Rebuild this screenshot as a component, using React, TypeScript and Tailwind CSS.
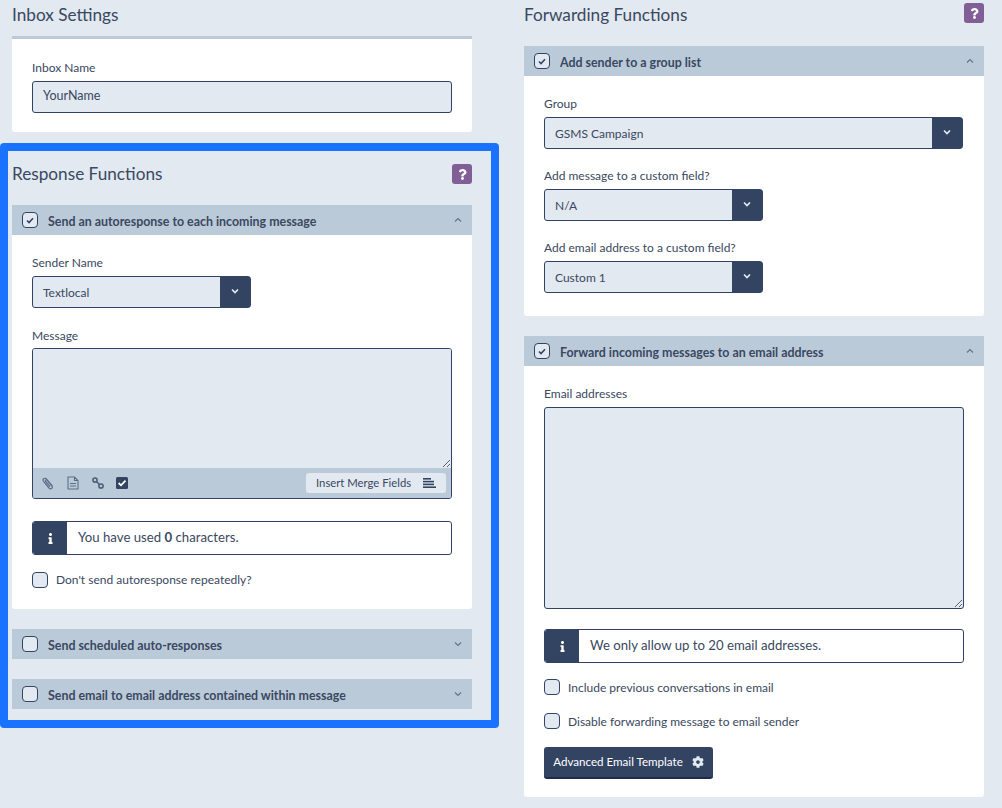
import React from "react";
import { FaInfo, FaCog, FaQuestion } from "react-icons/fa";

function Help() {
  return (
    <div className="w-5 h-5 rounded-[3px] bg-[#825e96] flex items-center justify-center text-white">
      <FaQuestion className="w-[9px] h-[11px]" />
    </div>
  );
}

function Chevron({ up, bold }: { up?: boolean; bold?: boolean }) {
  return (
    <svg width="8" height="6" viewBox="0 0 8 6" fill="none" stroke="currentColor" strokeWidth={bold ? 1.7 : 1.1}>
      <path d={up ? "M1 4.5 L4 1.5 L7 4.5" : "M1 1.5 L4 4.5 L7 1.5"} />
    </svg>
  );
}

function Box({ checked }: { checked?: boolean }) {
  return (
    <span className="w-4 h-4 shrink-0 rounded-[4px] border border-[#334463] bg-[#e2e9f0] flex items-center justify-center">
      {checked && (
        <svg width="8" height="7" viewBox="0 0 8 7" fill="none" stroke="#334463" strokeWidth="1.6">
          <path d="M1 3.5 L3 5.5 L7 1.2" />
        </svg>
      )}
    </span>
  );
}

function Header({ title, open, checked }: { title: string; open?: boolean; checked?: boolean }) {
  return (
    <div className="h-[30px] bg-[#bacad9] flex items-center px-[10px]">
      <Box checked={checked} />
      <span className="ml-[10px] flex-1 pt-[4px] text-[12.4px] font-bold text-[#3a4860]">{title}</span>
      <span className="text-[#5f738c] flex">
        <Chevron up={open} />
      </span>
    </div>
  );
}

function Select({ value, wide }: { value: string; wide?: boolean }) {
  return (
    <div className={`h-8 flex rounded-[3px] border border-[#334463] bg-[#e2e9f0] ${wide ? "w-[419px]" : "w-[219px]"}`}>
      <div className="flex-1 pl-[10px] text-[12px] leading-[32px] text-[#3a4860]">{value}</div>
      <div className="w-[30px] bg-[#334463] flex items-center justify-center text-[#e2e9f0]">
        <span className="flex -mt-[3px]">
          <Chevron bold />
        </span>
      </div>
    </div>
  );
}

function Label({ children }: { children: React.ReactNode }) {
  return <div className="text-[12px] leading-[16px] mb-[5px] text-[#3a4860]">{children}</div>;
}

function Info({ children }: { children: React.ReactNode }) {
  return (
    <div className="h-[34px] flex rounded-[3px] border border-[#334463] bg-white overflow-hidden">
      <div className="w-[34px] bg-[#334463] flex items-center justify-center text-white">
        <FaInfo className="w-[5px] h-[11px]" />
      </div>
      <div className="pl-[11px] text-[13.2px] leading-[30px] text-[#3a4860]">{children}</div>
    </div>
  );
}

function Check({ label, low }: { label: string; low?: boolean }) {
  return (
    <div className="flex items-center gap-2 h-4">
      <Box />
      <span className={`text-[12px] text-[#3a4860] ${low ? "pt-[2px]" : ""}`}>{label}</span>
    </div>
  );
}

function Toolbar() {
  return (
    <div className="h-[30px] bg-[#bacad9] flex items-center pl-[9px] pr-[5px] text-[#5c6f89]">
      <svg width="12" height="13" viewBox="0 0 12 13" fill="none" stroke="currentColor" strokeWidth="1.2">
        <path d="M10.5 9.2 L4.6 2.2 C3.7 1.1 2.4 1 1.6 1.7 C0.8 2.4 0.8 3.7 1.7 4.7 L7 11 C7.8 11.9 9 12.1 9.8 11.4 C10.6 10.7 10.4 9.6 9.7 8.8 L5 3.2 C4.6 2.8 4 2.7 3.6 3.1 C3.2 3.4 3.3 4 3.7 4.5 L8 9.6" />
      </svg>
      <svg className="ml-[13px]" width="12" height="14" viewBox="0 0 12 14" fill="none" stroke="currentColor" strokeWidth="1.1">
        <path d="M1 1 H7.5 L11 4.5 V13 H1 Z M7.5 1 V4.5 H11 M3 7.5 H9 M3 10 H9" />
      </svg>
      <svg className="ml-[13px]" width="12" height="12" viewBox="0 0 12 12" fill="none" stroke="#475a76" strokeWidth="1.5">
        <circle cx="3" cy="3" r="2.1" />
        <circle cx="9" cy="9" r="2.1" />
        <path d="M4.5 4.5 L7.5 7.5" />
      </svg>
      <svg className="ml-[12px]" width="12" height="12" viewBox="0 0 12 12">
        <rect width="12" height="12" rx="1.5" fill="#334463" />
        <path d="M2.6 6 L5 8.3 L9.5 3.6" fill="none" stroke="#ffffff" strokeWidth="1.8" />
      </svg>
      <div className="ml-auto h-5 w-[140px] rounded-[3px] bg-[#e2e9f0] flex items-center justify-between px-[10px] text-[11.3px] text-[#3a4860]">
        <span>Insert Merge Fields</span>
        <svg width="13" height="10" viewBox="0 0 13 10" fill="#334463">
          <rect y="0" width="8" height="1.6" />
          <rect y="2.8" width="11" height="1.6" />
          <rect y="5.6" width="11" height="1.6" />
          <rect y="8.4" width="13" height="1.6" />
        </svg>
      </div>
    </div>
  );
}

export default function App() {
  return (
    <div className="w-[1002px] h-[808px] overflow-hidden bg-[#e2e9f0] flex font-['Lato',sans-serif] text-[#3a4860]">
      <div className="w-[499px] shrink-0">
        <div className="pl-3 pr-[27px]">
          <h2 className="h-9 pt-[4px] text-[17.2px] leading-[22px] font-normal">Inbox Settings</h2>
          <div className="h-[96px] bg-white border-t-[3px] border-[#bacad9] rounded-b-[3px] px-5 pt-[21px]">
            <Label>Inbox Name</Label>
            <div className="h-8 rounded-[3px] border border-[#334463] bg-[#e2e9f0] pl-[10px] text-[12.5px] leading-[27px]">YourName</div>
          </div>
        </div>
        <div className="mt-[11px] h-[585px] rounded-[4px] border-8 border-[#1a73ff] pl-[4px] pr-[19px]">
          <div className="flex items-center justify-between h-[54px] pb-[8px]">
            <h2 className="text-[17.2px] leading-[22px] font-normal">Response Functions</h2>
            <Help />
          </div>
          <Header title="Send an autoresponse to each incoming message" open checked />
          <div className="h-[374px] bg-white rounded-b-[3px] px-5 pt-[20px]">
            <Label>Sender Name</Label>
            <Select value="Textlocal" />
            <div className="mt-5">
              <Label>Message</Label>
            </div>
            <div className="h-[151px] rounded-[3px] border border-[#334463] bg-[#e2e9f0] flex flex-col overflow-hidden -mt-[1px]">
              <textarea className="flex-1 bg-[#e2e9f0] outline-none" />
              <Toolbar />
            </div>
            <div className="mt-[22px]">
              <Info>
                You have used <b>0</b> characters.
              </Info>
            </div>
            <div className="mt-[17px]">
              <Check label="Don't send autoresponse repeatedly?" />
            </div>
          </div>
          <div className="mt-5">
            <Header title="Send scheduled auto-responses" />
          </div>
          <div className="mt-5">
            <Header title="Send email to email address contained within message" />
          </div>
        </div>
      </div>
      <div className="ml-[25px] w-[460px] shrink-0">
        <div className="flex justify-between h-[46px] pt-[3px]">
          <h2 className="text-[17.2px] leading-[22px] font-normal pt-[1px]">Forwarding Functions</h2>
          <Help />
        </div>
        <Header title="Add sender to a group list" open checked />
        <div className="h-[240px] bg-white rounded-b-[3px] px-5 pt-5">
          <Label>Group</Label>
          <Select value="GSMS Campaign" wide />
          <div className="mt-[19px]">
            <Label>Add message to a custom field?</Label>
          </div>
          <Select value="N/A" />
          <div className="mt-[19px]">
            <Label>Add email address to a custom field?</Label>
          </div>
          <Select value="Custom 1" />
        </div>
        <div className="mt-5">
          <Header title="Forward incoming messages to an email address" open checked />
        </div>
        <div className="h-[431px] bg-white rounded-b-[3px] px-5 pt-5">
          <Label>Email addresses</Label>
          <textarea className="block w-full h-[202px] rounded-[3px] border border-[#334463] bg-[#e2e9f0] outline-none" />
          <div className="mt-5">
            <Info>We only allow up to 20 email addresses.</Info>
          </div>
          <div className="mt-4">
            <Check label="Include previous conversations in email" low />
          </div>
          <div className="mt-[18px]">
            <Check label="Disable forwarding message to email sender" low />
          </div>
          <button className="mt-[18px] h-8 w-[169px] rounded-[3px] bg-[#334463] border-b-2 border-[#1d2c4d] text-white text-[11.6px] flex items-center justify-center gap-[9px]">
            Advanced Email Template <FaCog className="w-[12px] h-[12px] text-[#e2e9f0]" />
          </button>
        </div>
      </div>
    </div>
  );
}
